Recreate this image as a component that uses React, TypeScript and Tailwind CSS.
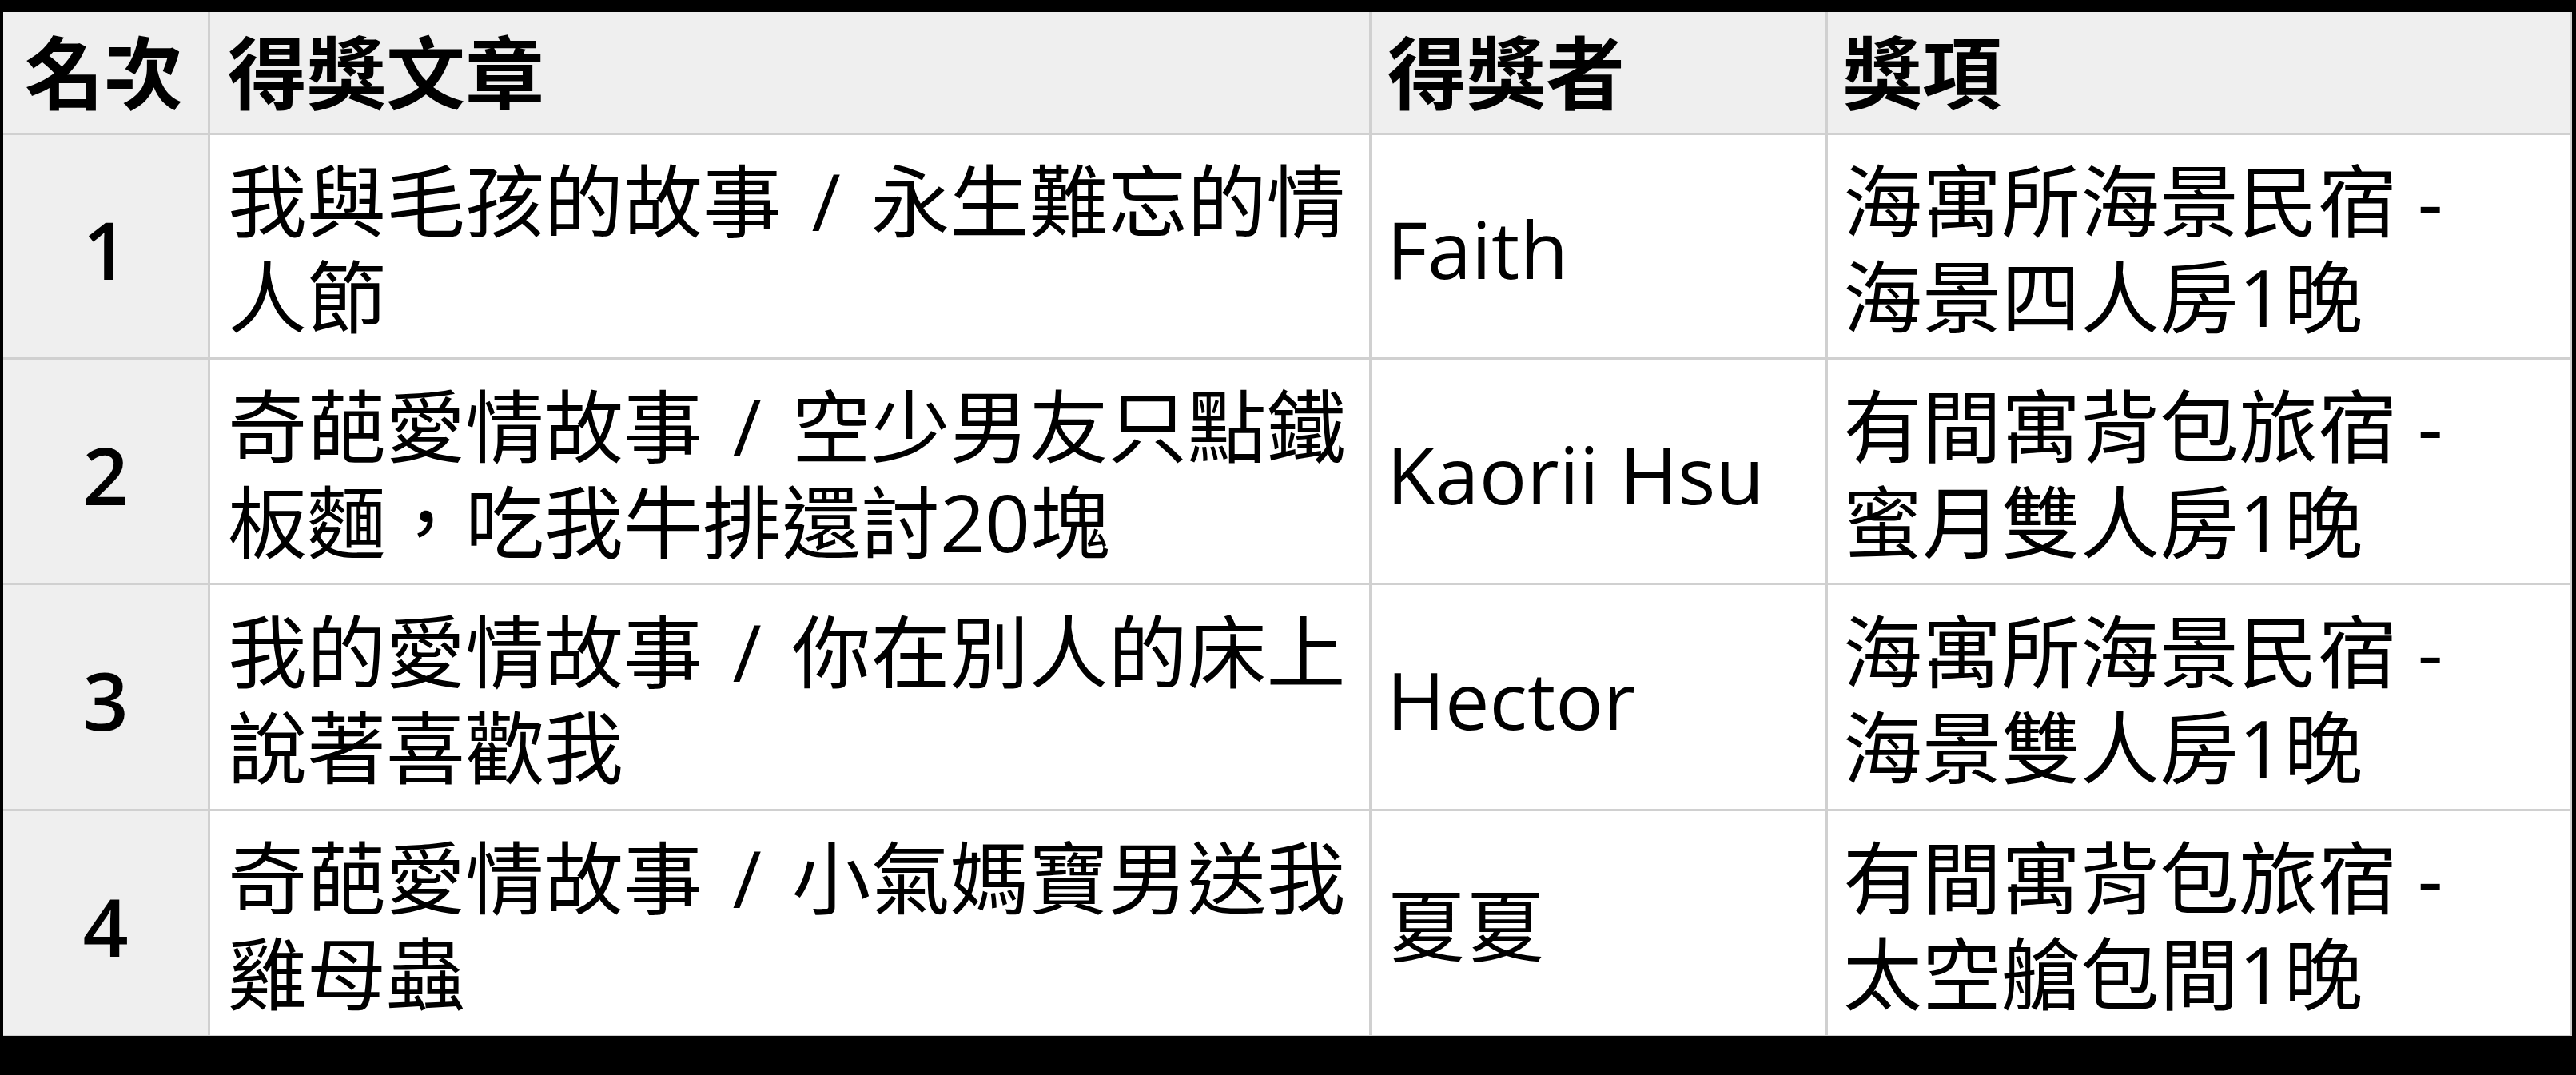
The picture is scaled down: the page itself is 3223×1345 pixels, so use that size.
import React from 'react';

type Row = {
  rank: string;
  article: React.ReactNode[];
  winner: string;
  prize: string[];
};

const Slash = () => <span className="mx-[0.12em]">/</span>;

const rows: Row[] = [
  {
    rank: '1',
    article: [
      <>我與毛孩的故事 <Slash /> 永生難忘的情</>,
      <>人節</>,
    ],
    winner: 'Faith',
    prize: ['海寓所海景民宿 -', '海景四人房1晚'],
  },
  {
    rank: '2',
    article: [
      <>奇葩愛情故事 <Slash /> 空少男友只點鐵</>,
      <>板麵，吃我牛排還討20塊</>,
    ],
    winner: 'Kaorii Hsu',
    prize: ['有間寓背包旅宿 -', '蜜月雙人房1晚'],
  },
  {
    rank: '3',
    article: [
      <>我的愛情故事 <Slash /> 你在別人的床上</>,
      <>說著喜歡我</>,
    ],
    winner: 'Hector',
    prize: ['海寓所海景民宿 -', '海景雙人房1晚'],
  },
  {
    rank: '4',
    article: [
      <>奇葩愛情故事 <Slash /> 小氣媽寶男送我</>,
      <>雞母蟲</>,
    ],
    winner: '夏夏',
    prize: ['有間寓背包旅宿 -', '太空艙包間1晚'],
  },
];

const font = "font-['Open_Sans','Noto_Sans_CJK_TC',sans-serif]";

export default function App() {
  return (
    <div className={`h-[1345px] w-[3223px] bg-black pt-[15px] pl-[4px] ${font} text-black`}>
      <div className="grid w-[3214px] grid-cols-[256px_1450px_568px_928px] grid-rows-[151px_278px_279px_280px_280px] gap-[3px] bg-[#d0d0d0] pr-[3px] pb-[1px]">
        {/* Header */}
        <div className="flex items-center justify-center bg-[#efefef] pr-[4px] text-[99px] font-bold leading-[120px]">
          名次
        </div>
        <div className="flex items-center bg-[#efefef] pl-[22px] text-[99px] font-bold leading-[120px]">
          得獎文章
        </div>
        <div className="flex items-center bg-[#efefef] pl-[20px] text-[99px] font-bold leading-[120px]">
          得獎者
        </div>
        <div className="flex items-center bg-[#efefef] pl-[19px] text-[99px] font-bold leading-[120px]">
          獎項
        </div>

        {rows.map((row) => (
          <React.Fragment key={row.rank}>
            <div className="flex items-center justify-center bg-[#efefef] pt-[6px] text-[100px] font-semibold leading-[120px]">
              {row.rank}
            </div>
            <div className="flex flex-col justify-center bg-white pl-[22px] pt-[6px] text-[99px] leading-[120px] whitespace-nowrap">
              {row.article.map((line, i) => (
                <div key={i}>{line}</div>
              ))}
            </div>
            <div className="flex items-center bg-white pl-[19px] pt-[6px] text-[99px] leading-[120px] whitespace-nowrap">
              {row.winner}
            </div>
            <div className="flex flex-col justify-center bg-white pl-[19px] pt-[6px] text-[99px] leading-[120px] whitespace-nowrap">
              {row.prize.map((line, i) => (
                <div key={i}>{line}</div>
              ))}
            </div>
          </React.Fragment>
        ))}
      </div>
    </div>
  );
}
